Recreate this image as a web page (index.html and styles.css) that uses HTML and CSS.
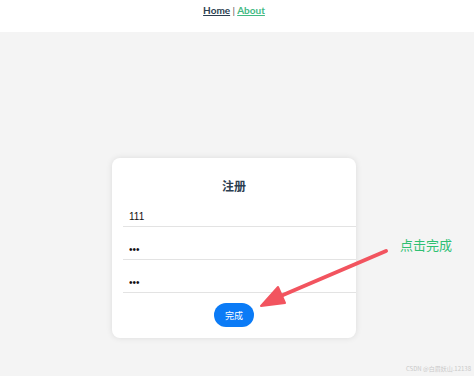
FILE: index.html
```html
<!DOCTYPE html>
<html lang="zh">
<head>
<meta charset="utf-8">
<link rel="stylesheet" href="styles.css">
</head>
<body>
<nav class="nav"><a class="nav-home" href="#">Home</a> <span class="sep">|</span> <a class="nav-about" href="#">About</a></nav>
<main class="main">
  <form class="card">
    <h1 class="title">注册</h1>
    <input class="field" type="text" value="111">
    <input class="field" type="password" value="111">
    <input class="field" type="password" value="111">
    <button class="btn" type="button">完成</button>
  </form>
  <svg class="arrow" width="474" height="376" viewBox="0 0 474 376">
    <path d="M386 251 L276 298" stroke="#f2545f" stroke-width="4" stroke-linecap="round" fill="none"/>
    <polygon points="261,306 278,287 285,303" fill="#f2545f" stroke="#f2545f" stroke-width="2" stroke-linejoin="round"/>
  </svg>
  <div class="note">点击完成</div>
  <div class="mark">CSDN @白眉妖山.12138</div>
</main>
</body>
</html>
```
FILE: styles.css
```css
html, body { margin: 0; padding: 0; }
body {
  width: 474px; height: 376px; overflow: hidden; background: #fff;
  font-family: "Liberation Sans", "Noto Sans CJK SC", sans-serif;
  color: #2c3e50; position: relative;
}
.nav {
  height: 32px; box-sizing: border-box; padding-top: 4px;
  text-align: center; font-size: 10px; font-weight: bold; color: #2c3e50;
  padding-right: 6px; font-family: "Lato", "Liberation Sans", sans-serif;
}
.nav a { text-decoration: underline; }
.sep { font-weight: normal; color: #555; }
.nav-home { color: #2c3e50; }
.nav-about { color: #42b983; }
.main {
  background: #f4f4f4; height: 344px; box-sizing: border-box;
  padding-top: 126px; padding-left: 112px;
}
.card {
  width: 244px; height: 180px; box-sizing: border-box; background: #fff;
  border-radius: 8px; box-shadow: 0 0 6px rgba(0,0,0,0.10);
  padding: 20px 0 0 11px; display: flex; flex-direction: column; align-items: stretch;
}
.title {
  margin: 0; height: 16px; line-height: 16px; font-size: 12px; font-weight: 600;
  text-align: center; padding-right: 11px;
  font-family: "Noto Sans CJK SC", sans-serif; color: #2c3e50;
}
.field {
  display: block; height: 33px; box-sizing: border-box; margin: 0;
  border: none; border-bottom: 1px solid #e3e3e3; outline: none; background: transparent;
  padding: 12px 0 0 6px; font-size: 10px; font-family: "Liberation Sans", sans-serif; color: #111;
}
.btn {
  align-self: center; margin: 10px 11px 0 0; width: 40px; height: 24px; border: none;
  border-radius: 12px; background: #0b7bf6; color: #fff; font-size: 9px; padding: 0;
  font-family: "Noto Sans CJK SC", sans-serif;
}
.arrow { position: absolute; left: 0; top: 0; pointer-events: none; }
.note {
  position: absolute; left: 400px; top: 236px; font-size: 13px; color: #2fc073;
  font-family: "Noto Sans CJK SC", sans-serif; line-height: 18px;
}
.mark {
  position: absolute; right: 3px; bottom: 3px; font-size: 6px; color: #c9c9c9;
  font-family: "Noto Sans CJK SC", sans-serif;
}
```
